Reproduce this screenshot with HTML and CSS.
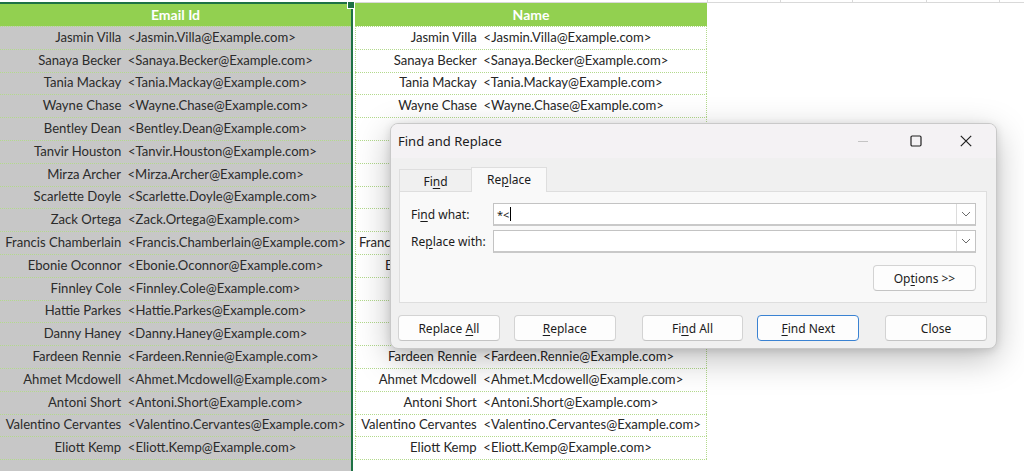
FILE: index.html
```html
<!DOCTYPE html>
<html>
<head>
<meta charset="utf-8">
<link rel="stylesheet" href="styles.css">
</head>
<body>
<div class="sheet">
  <div class="strip">
    <div class="s s1"></div><div class="s s2"></div><div class="s s3"></div><div class="s s4"></div><div class="s s5"></div><div class="s s6"></div><div class="s s7"></div>
  </div>
  <div class="cols">
    <div class="col col-a">
      <div class="hdr">Email Id</div>
      <div class="cell">Jasmin Villa  &lt;Jasmin.Villa@Example.com&gt;</div>
      <div class="cell">Sanaya Becker  &lt;Sanaya.Becker@Example.com&gt;</div>
      <div class="cell">Tania Mackay  &lt;Tania.Mackay@Example.com&gt;</div>
      <div class="cell">Wayne Chase  &lt;Wayne.Chase@Example.com&gt;</div>
      <div class="cell">Bentley Dean  &lt;Bentley.Dean@Example.com&gt;</div>
      <div class="cell">Tanvir Houston  &lt;Tanvir.Houston@Example.com&gt;</div>
      <div class="cell">Mirza Archer  &lt;Mirza.Archer@Example.com&gt;</div>
      <div class="cell">Scarlette Doyle  &lt;Scarlette.Doyle@Example.com&gt;</div>
      <div class="cell">Zack Ortega  &lt;Zack.Ortega@Example.com&gt;</div>
      <div class="cell">Francis Chamberlain  &lt;Francis.Chamberlain@Example.com&gt;</div>
      <div class="cell">Ebonie Oconnor  &lt;Ebonie.Oconnor@Example.com&gt;</div>
      <div class="cell">Finnley Cole  &lt;Finnley.Cole@Example.com&gt;</div>
      <div class="cell">Hattie Parkes  &lt;Hattie.Parkes@Example.com&gt;</div>
      <div class="cell">Danny Haney  &lt;Danny.Haney@Example.com&gt;</div>
      <div class="cell">Fardeen Rennie  &lt;Fardeen.Rennie@Example.com&gt;</div>
      <div class="cell">Ahmet Mcdowell  &lt;Ahmet.Mcdowell@Example.com&gt;</div>
      <div class="cell">Antoni Short  &lt;Antoni.Short@Example.com&gt;</div>
      <div class="cell">Valentino Cervantes  &lt;Valentino.Cervantes@Example.com&gt;</div>
      <div class="cell">Eliott Kemp  &lt;Eliott.Kemp@Example.com&gt;</div>
      <div class="cell last"></div>
      <div class="handle"></div>
    </div>
    <div class="col col-b"></div>
    <div class="col col-c">
      <div class="hdr">Name</div>
      <div class="cell">Jasmin Villa  &lt;Jasmin.Villa@Example.com&gt;</div>
      <div class="cell">Sanaya Becker  &lt;Sanaya.Becker@Example.com&gt;</div>
      <div class="cell">Tania Mackay  &lt;Tania.Mackay@Example.com&gt;</div>
      <div class="cell">Wayne Chase  &lt;Wayne.Chase@Example.com&gt;</div>
      <div class="cell"></div>
      <div class="cell"></div>
      <div class="cell"></div>
      <div class="cell"></div>
      <div class="cell"></div>
      <div class="cell clip"><span class="part">Franc</span></div>
      <div class="cell clip clip-e"><span class="part">E</span></div>
      <div class="cell"></div>
      <div class="cell"></div>
      <div class="cell"></div>
      <div class="cell">Fardeen Rennie  &lt;Fardeen.Rennie@Example.com&gt;</div>
      <div class="cell">Ahmet Mcdowell  &lt;Ahmet.Mcdowell@Example.com&gt;</div>
      <div class="cell">Antoni Short  &lt;Antoni.Short@Example.com&gt;</div>
      <div class="cell">Valentino Cervantes  &lt;Valentino.Cervantes@Example.com&gt;</div>
      <div class="cell">Eliott Kemp  &lt;Eliott.Kemp@Example.com&gt;</div>
      <div class="cell end"></div>
    </div>
    <div class="col col-rest"></div>
  </div>
</div>

<div class="dialog">
  <div class="titlebar">
    <div class="title">Find and Replace</div>
    <div class="wctrls">
      <div class="wbtn">
        <svg width="12" height="12" viewBox="0 0 12 12"><path d="M1 6.5h10" stroke="#c4c4c4" stroke-width="1"/></svg>
      </div>
      <div class="wbtn">
        <svg width="12" height="12" viewBox="0 0 12 12"><rect x="1" y="1" width="10" height="10" rx="1.2" fill="none" stroke="#1f1f1f" stroke-width="1.2"/></svg>
      </div>
      <div class="wbtn">
        <svg width="12" height="12" viewBox="0 0 12 12"><path d="M0.8 0.8L11.2 11.2M11.2 0.8L0.8 11.2" stroke="#1f1f1f" stroke-width="1.2"/></svg>
      </div>
    </div>
  </div>
  <div class="dbody">
    <div class="tabs">
      <div class="tab"><span>Fi<u>n</u>d</span></div>
      <div class="tab active"><span>Re<u>p</u>lace</span></div>
    </div>
    <div class="panel">
      <div class="fields">
        <label class="lbl">Fi<u>n</u>d what:</label>
        <div class="combo"><div class="val"><span>*&lt;</span><span class="caret"></span></div><div class="drop"><svg width="10" height="6" viewBox="0 0 10 6"><path d="M1 1l4 4 4-4" fill="none" stroke="#6b6b6b" stroke-width="1"/></svg></div></div>
        <label class="lbl">Re<u>p</u>lace with:</label>
        <div class="combo"><div class="val"></div><div class="drop"><svg width="10" height="6" viewBox="0 0 10 6"><path d="M1 1l4 4 4-4" fill="none" stroke="#6b6b6b" stroke-width="1"/></svg></div></div>
      </div>
      <div class="optrow"><div class="btn opt"><span>Op<u>t</u>ions &gt;&gt;</span></div></div>
    </div>
    <div class="btnrow">
      <div class="btn"><span>Replace <u>A</u>ll</span></div>
      <div class="btn"><span><u>R</u>eplace</span></div>
      <div class="btn sep"><span>Fi<u>n</u>d All</span></div>
      <div class="btn primary"><span><u>F</u>ind Next</span></div>
      <div class="btn sep"><span>Close</span></div>
    </div>
  </div>
</div>
</body>
</html>
```

FILE: styles.css
```css
html, body {
  margin: 0;
  padding: 0;
}
body {
  width: 1024px;
  height: 471px;
  overflow: hidden;
  background: #ffffff;
  position: relative;
  font-family: "Lato", "Open Sans", sans-serif;
}
.sheet {
  display: flex;
  flex-direction: column;
  height: 471px;
}
.strip {
  display: flex;
  height: 2px;
}
.s { height: 2px; border-right: 1px solid #d9d9d9; box-sizing: border-box; }
.s1 { width: 353px; border-right: none; }
.s2 { width: 354px; border-right: none; }
.s3 { width: 74px; border-left: 1px solid #d9d9d9; }
.s4 { width: 72px; }
.s5 { width: 74px; }
.s6 { width: 73px; }
.s7 { flex: 1; border-right: none; }

.cols {
  display: flex;
  flex: 1;
}
.col {
  display: flex;
  flex-direction: column;
  box-sizing: border-box;
}
.col-a {
  width: 353px;
  background: #c7c7c7;
  border-top: 2px solid #1e7145;
  border-right: 2px solid #1e7145;
  position: relative;
}
.col-b {
  width: 2px;
  border-top: 1px solid #d9d9d9;
  background: #ffffff;
}
.col-c {
  width: 352px;
  border-top: 1px solid #d9d9d9;
}
.col-rest {
  flex: 1;
  border-top: 1px solid #d9d9d9;
}
.hdr {
  height: 23px;
  background: #92d050;
  color: #ffffff;
  font-weight: 700;
  font-size: 14px;
  display: flex;
  align-items: center;
  justify-content: center;
  box-sizing: border-box;
  flex-shrink: 0;
  padding-bottom: 1px;
}
.col-a .hdr { height: 22px; }
.cell {
  height: 22.8px;
  flex-shrink: 0;
  box-sizing: border-box;
  border-top: 1px dotted #b3da8c;
  display: flex;
  align-items: center;
  justify-content: center;
  white-space: pre;
  font-size: 13.1px;
  color: #262626;
  padding-bottom: 2px;
}
.col-a .cell { color: #2b2b2b; }
.col-c .cell {
  border-left: 1px dotted #b3da8c;
  border-right: 1px dotted #b3da8c;
  background: #ffffff;
}
.col-c .cell.clip {
  justify-content: flex-start;
  padding-left: 3px;
}
.col-c .cell.clip-e { padding-left: 29px; }
.col-c .cell.end {
  height: 1px;
  border-left: none;
  border-right: none;
}
.col-a .cell.last { flex: 1; }
.handle {
  position: absolute;
  right: -4px;
  top: -3px;
  width: 6px;
  height: 6px;
  background: #1e7145;
  border: 1px solid #ffffff;
}

/* Dialog */
.dialog {
  position: absolute;
  left: 390px;
  top: 123px;
  width: 607px;
  height: 226px;
  box-sizing: border-box;
  border: 1px solid #c9c9c9;
  border-radius: 8px;
  background: #f0f0f0;
  box-shadow: 0 10px 34px rgba(0, 0, 0, 0.26), 0 2px 8px rgba(0, 0, 0, 0.12);
  overflow: hidden;
  font-family: "Noto Sans", "Open Sans", sans-serif;
  font-size: 12px;
  color: #1b1b1b;
}
.titlebar {
  height: 34px;
  background: #f4f2f4;
  display: flex;
  align-items: center;
  justify-content: space-between;
  padding-left: 7px;
}
.title {
  font-size: 13px;
  color: #1b1b1b;
  padding-bottom: 1px;
}
.wctrls {
  display: flex;
  height: 100%;
}
.wbtn {
  width: 53px;
  display: flex;
  align-items: center;
  justify-content: center;
  padding-bottom: 1px;
}
.wbtn:last-child { width: 48px; margin-right: 6px; }
.dbody {
  padding: 8px 9px 0 7px;
}
.tabs {
  display: flex;
  align-items: flex-end;
  height: 25px;
  margin-left: 1px;
}
.tab {
  width: 72px;
  height: 22px;
  box-sizing: border-box;
  border: 1px solid #dedede;
  border-bottom: none;
  border-right: none;
  display: flex;
  align-items: center;
  justify-content: center;
  background: #f0f0f0;
  padding-top: 1px;
}
.tab.active {
  width: 76px;
  height: 25px;
  background: #f9f9f9;
  border-right: 1px solid #dedede;
  position: relative;
  top: 1px;
  padding-bottom: 3px;
}
.panel {
  margin-left: 1px;
  width: 588px;
  height: 112px;
  box-sizing: border-box;
  border: 1px solid #dedede;
  background: #f9f9f9;
  padding: 11px 10px 0 11px;
}
.fields {
  display: grid;
  grid-template-columns: 82px 1fr;
  row-gap: 4px;
  align-items: center;
}
.lbl {
  font-size: 12px;
}
.combo {
  height: 23px;
  box-sizing: border-box;
  border: 1px solid #c3c3c3;
  border-bottom: 2px solid #c9c9c9;
  background: #ffffff;
  display: flex;
}
.val {
  flex: 1;
  display: flex;
  align-items: center;
  padding-left: 3px;
  font-size: 11px;
}
.caret {
  display: inline-block;
  width: 1px;
  height: 14px;
  background: #000000;
  margin-left: 1px;
}
.drop {
  width: 18px;
  border-left: 1px solid #dcdcdc;
  display: flex;
  align-items: center;
  justify-content: center;
  background: #ffffff;
}
.optrow {
  display: flex;
  justify-content: flex-end;
  margin-top: 12px;
}
.btn {
  width: 102px;
  height: 26px;
  box-sizing: border-box;
  border: 1px solid #d3d3d3;
  border-bottom-color: #c4c4c4;
  border-radius: 4px;
  background: #fdfdfd;
  display: flex;
  align-items: center;
  justify-content: center;
  font-size: 12px;
  color: #1b1b1b;
  white-space: pre;
}
.btn.opt { width: 103px; }
.btn.primary {
  border: 1px solid #3a82d2;
}
.btnrow {
  display: flex;
  gap: 14px;
  margin-top: 12px;
}
.btn.sep { margin-left: 12px; }
u { text-underline-offset: 2px; }
```
